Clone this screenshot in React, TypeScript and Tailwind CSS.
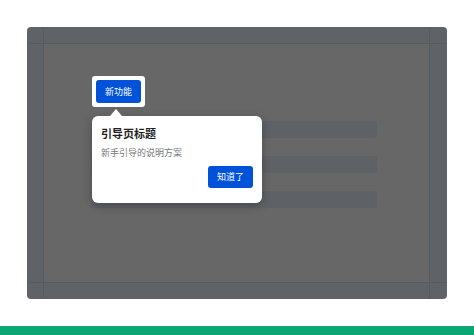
export default function App() {
  const font = { fontFamily: '"Noto Sans CJK SC", "Noto Sans", sans-serif' }
  return (
    <div className="w-[474px] h-[335px] bg-white flex flex-col overflow-hidden" style={font}>
      <div className="pt-[27px] pl-[27px]">
        <div className="relative w-[420px] h-[272px] rounded-[4px] overflow-hidden bg-[#5f6368] grid grid-cols-[17px_1fr_18px] grid-rows-[17px_1fr_17px]">
          <div className="border-r border-b border-[#565b63]" />
          <div className="border-b border-[#565b63]" />
          <div className="border-l border-b border-[#565b63]" />
          <div className="border-r border-[#565b63]" />
          <div className="bg-[#676767] pt-[77px] pl-[47px] flex flex-col gap-[18px]">
            <div className="w-[286px] h-[17px] bg-[#5e6166] rounded-[2px]" />
            <div className="w-[286px] h-[17px] bg-[#5e6166] rounded-[2px]" />
            <div className="w-[286px] h-[17px] bg-[#5e6166] rounded-[2px]" />
          </div>
          <div className="border-l border-[#565b63]" />
          <div className="border-r border-t border-[#565b63]" />
          <div className="border-t border-[#565b63]" />
          <div className="border-l border-t border-[#565b63]" />

          {/* highlighted target */}
          <div className="absolute left-[65px] top-[49px] w-[53px] h-[31px] bg-white rounded-[3px] p-[4px]">
            <div className="w-full h-full bg-[#0052d9] rounded-[3px] flex items-center justify-center text-white text-[9px]">
              新功能
            </div>
          </div>

          {/* popup */}
          <div className="absolute left-[65px] top-[89px] w-[170px] h-[87px] bg-white rounded-[6px] shadow-[0_3px_10px_rgba(0,0,0,0.25)] pt-[9px] px-[9px] flex flex-col">
            <div className="absolute left-[18px] -top-[7px] w-0 h-0 border-l-[6px] border-r-[6px] border-b-[7px] border-l-transparent border-r-transparent border-b-white" />
            <div className="text-[11px] font-bold text-[#1f1f1f] leading-[16px]">引导页标题</div>
            <div className="text-[9px] text-[#777777] leading-[12px] mt-[6px]">新手引导的说明方案</div>
            <div className="flex justify-end mt-[7px]">
              <div className="w-[45px] h-[22px] bg-[#0052d9] rounded-[3px] flex items-center justify-center text-white text-[9px]">
                知道了
              </div>
            </div>
          </div>
        </div>
      </div>
      <div className="mt-[27px] h-[9px] bg-[#0ba673]" />
    </div>
  )
}
